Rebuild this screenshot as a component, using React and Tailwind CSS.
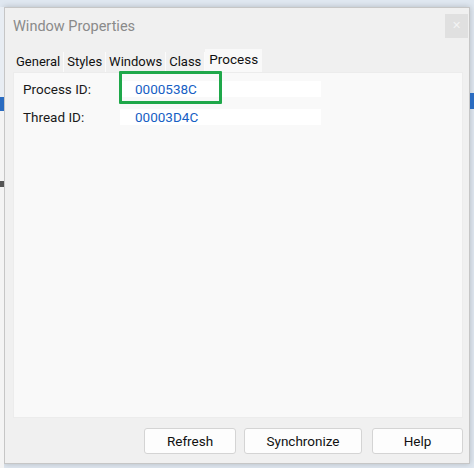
import React from 'react';

const tabs = ['General', 'Styles', 'Windows', 'Class', 'Process'];

function Field({ label, value }) {
  return (
    <div className="flex items-center h-[16px]">
      <span className="w-[106px] pl-[9px] text-[13.5px] text-[#1a1a1a]">{label}</span>
      <div className="w-[201px] h-[16px] bg-white flex items-center pl-[15px] text-[13.5px] text-[#1660c4]">{value}</div>
    </div>
  );
}

export default function App() {
  return (
    <div
      className="relative w-[474px] h-[468px] overflow-hidden bg-[#dfe7f0]"
      style={{ fontFamily: 'Roboto, "Noto Sans", sans-serif' }}
    >
      {/* left strip behind the dialog */}
      <div className="absolute left-0 top-[7px] w-[4px] h-[461px] bg-[#f4f4f4]">
        <div className="h-[90px] bg-[#e8edf3]" />
        <div className="h-[14px] bg-[#2a6bc0]" />
        <div className="h-[70px]" />
        <div className="h-[6px] bg-[#555]" />
      </div>
      <div className="absolute right-0 top-[93px] w-[4px] h-[16px] bg-[#2a6bc0]" />

      <div className="ml-[4px] mt-[7px] w-[466px] h-[457px] bg-[#f0f0f0] border border-[#c6c6c6] shadow-[0_0_6px_rgba(0,0,0,0.2)] flex flex-col">
        {/* title bar */}
        <div className="flex items-start justify-between h-[42px]">
          <span className="pl-[8px] pt-[8px] text-[14.5px] text-[#8a8a8a]">Window Properties</span>
          <div className="mt-[6px] mr-[1px] w-[23px] h-[24px] bg-[#e0e0e0] flex items-center justify-center text-[11px] text-[#f4f4f4]">✕</div>
        </div>

        {/* tabs */}
        <div className="px-[8px] flex flex-col">
          <div className="flex items-end h-[22px]">
            {tabs.map((t) => (
              t === 'Process' ? (
                <div key={t} className="h-[23px] px-[4px] bg-[#f9f9f9] text-[13.5px] text-[#111] flex items-start pt-[1px] leading-[18px]">{t}</div>
              ) : (
                <div key={t} className="h-[20px] px-[3px] border-r border-[#fbfbfb] text-[13px] text-[#111] flex items-center leading-[18px]">{t}</div>
              )
            ))}
          </div>
          <div className="w-[450px] h-[346px] bg-[#f9f9f9] border border-[#ececec] flex flex-col gap-[12px] pt-[8px]">
            <Field label="Process ID:" value="0000538C" />
            <Field label="Thread ID:" value="00003D4C" />
          </div>
        </div>

        {/* buttons */}
        <div className="flex justify-end pr-[6px] pt-[10px]">
          <button className="w-[92px] h-[26px] bg-[#fdfdfd] border border-[#d4d4d4] rounded-[3px] text-[13.5px] text-[#111]">Refresh</button>
          <button className="ml-[8px] w-[118px] h-[26px] bg-[#fdfdfd] border border-[#d4d4d4] rounded-[3px] text-[13.5px] text-[#111]">Synchronize</button>
          <button className="ml-[10px] w-[91px] h-[26px] bg-[#fdfdfd] border border-[#d4d4d4] rounded-[3px] text-[13.5px] text-[#111]">Help</button>
        </div>
      </div>

      {/* green highlight */}
      <div className="absolute left-[119px] top-[71px] w-[103px] h-[33px] border-[3px] border-[#1fa84a] rounded-[1px]" />
    </div>
  );
}
